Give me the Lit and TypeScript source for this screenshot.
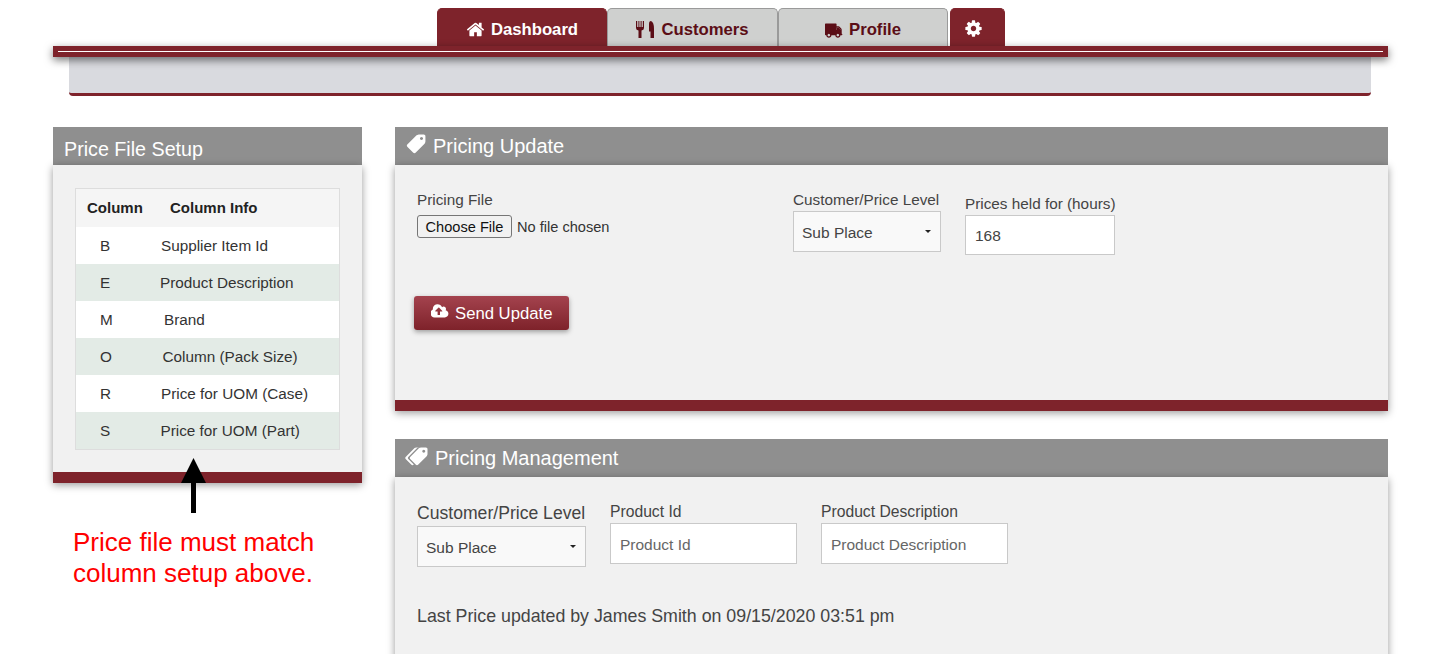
import { LitElement, html, css, svg } from "lit";
import { customElement } from "lit/decorators.js";

const P = {
  home: "M1472 992v480q0 26-19 45t-45 19h-384v-384h-256v384h-384q-26 0-45-19t-19-45v-480q0-1 .5-3t.5-3l575-474 575 474q1 2 1 6zm223-69l-62 74q-8 9-21 11h-3q-13 0-21-7l-692-577-692 577q-12 8-24 7-13-2-21-11l-62-74q-8-10-7-23.500t11-21.500l719-599q32-26 76-26t76 26l244 204v-195q0-14 9-23t23-9h192q14 0 23 9t9 23v408l219 182q10 8 11 21.500t-7 23.500z",
  truck: "M640 1408q0-52-38-90t-90-38-90 38-38 90 38 90 90 38 90-38 38-90zm-384-512h384v-256h-158q-13 0-22 9l-195 195q-9 9-9 22v30zm1280 512q0-52-38-90t-90-38-90 38-38 90 38 90 90 38 90-38 38-90zm256-1088v1024q0 15-4 26.500t-13.500 18.500-16.500 11.500-23.500 6-22.500 2-25.500 0-22.500-.5q0 106-75 181t-181 75-181-75-75-181h-384q0 106-75 181t-181 75-181-75-75-181h-64q-3 0-22.500.5t-25.500 0-22.500-2-23.500-6-16.500-11.500-13.500-18.500-4-26.500q0-26 19-45t45-19v-320q0-8-.5-35t0-38 2.500-34.500 6.500-37 14-30.500 22.500-30l198-198q19-19 50.500-32t58.500-13h160v-192q0-26 19-45t45-19h1024q26 0 45 19t19 45z",
  truckWin: "M256 896h384v-256h-158q-13 0-22 9l-195 195q-9 9-9 22v30z",
  cog: "M1152 896q0-106-75-181t-181-75-181 75-75 181 75 181 181 75 181-75 75-181zm512-109v222q0 12-8 23t-20 13l-185 28q-19 54-39 91 35 50 107 138 10 12 10 25t-9 23q-27 37-99 108t-94 71q-12 0-26-9l-138-108q-44 23-91 38-16 136-29 186-7 28-36 28h-222q-14 0-24.500-8.500t-11.500-21.500l-28-184q-49-16-90-37l-141 107q-10 9-25 9-14 0-25-11-126-114-165-168-7-10-7-23 0-12 8-23 15-21 51-66.500t54-70.500q-27-50-41-99l-183-27q-13-2-21-12.500t-8-23.500v-222q0-12 8-23t19-13l186-28q14-46 39-92-40-57-107-138-10-12-10-24 0-10 9-23 26-36 98.500-107.500t94.500-71.500q13 0 26 10l138 107q44-23 91-38 16-136 29-186 7-28 36-28h222q14 0 24.500 8.500t11.500 21.500l28 184q49 16 90 37l142-107q9-9 24-9 13 0 25 10 129 119 165 170 7 8 7 22 0 12-8 23-15 21-51 66.500t-54 70.500q26 50 41 98l183 28q13 2 21 12.500t8 23.500z",
  tag: "M576 448q0-53-37.500-90.500t-90.500-37.500-90.500 37.500-37.500 90.500 37.500 90.500 90.500 37.500 90.500-37.500 37.500-90.500zm1067 576q0 53-37 90l-491 492q-39 37-91 37-53 0-90-37l-715-716q-38-37-64.500-101t-26.500-117v-416q0-52 38-90t90-38h416q53 0 117 26.500t102 64.500l715 714q37 39 37 91z",
  tags: "M576 448q0-53-37.500-90.500t-90.500-37.500-90.500 37.500-37.500 90.500 37.500 90.500 90.500 37.500 90.500-37.500 37.500-90.500zm1067 576q0 53-37 90l-491 492q-39 37-91 37-53 0-90-37l-715-716q-38-37-64.500-101t-26.500-117v-416q0-52 38-90t90-38h416q53 0 117 26.500t102 64.500l715 714q37 39 37 91zm384 0q0 53-37 90l-491 492q-38 37-90 37-36 0-59-14t-53-45l470-470q37-37 37-90 0-52-37-91l-715-714q-38-38-102-64.500t-117-26.500h224q53 0 117 26.500t102 64.500l715 714q37 39 37 91z",
  cloud: "M1216 864q0-14-9-23l-352-352q-9-9-23-9t-23 9l-351 351q-10 12-10 24 0 14 9 23t23 9h224v352q0 13 9.500 22.500t22.500 9.500h192q13 0 22.500-9.500t9.500-22.500v-352h224q13 0 22.500-9.500t9.500-22.500zm640 288q0 159-112.500 271.500t-271.500 112.500h-1088q-185 0-316.500-131.500t-131.500-316.500q0-130 70-240t188-165q-2-30-2-43 0-212 150-362t362-150q156 0 285.500 87t188.500 231q71-62 166-62 106 0 181 75t75 181q0 76-41 138 130 31 213.500 135.500t83.500 238.500z",
};

const icon = (d: string | string[], w: number, vw: number, flip = false) => html`<svg
  class="ico ${flip ? "flip" : ""}"
  width=${w}
  height=${(w * 1792) / vw}
  viewBox="0 0 ${vw} 1792"
  fill="currentColor"
>${(Array.isArray(d) ? d : [d]).map((p) => svg`<path d=${p}></path>`)}</svg>`;

const ROWS: [string, string, number][] = [
  ["B", "Supplier Item Id", 85],
  ["E", "Product Description", 84],
  ["M", "Brand", 88],
  ["O", "Column (Pack Size)", 86.5],
  ["R", "Price for UOM (Case)", 85],
  ["S", "Price for UOM (Part)", 84.5],
];

@customElement("app-root")
export class AppRoot extends LitElement {
  static styles = css`
    :host {
      display: block;
      height: 100vh;
      overflow: hidden;
      background: #fff;
      padding: 0 52px 0 53px;
      box-sizing: border-box;
      font-family: "Liberation Sans", Arial, sans-serif;
      color: #444;
    }
    .ico { display: block; flex: none; }
    .flip { transform: scaleX(-1); }
    nav {
      display: flex;
      justify-content: center;
      padding: 8px 0 0 1px;
      height: 38px;
      box-sizing: content-box;
    }
    .tab {
      box-sizing: border-box;
      height: 38px;
      width: 170px;
      display: flex;
      align-items: center;
      justify-content: center;
      gap: 6px;
      font-size: 16.7px;
      font-weight: 700;
      color: #5b0d16;
      background: #cfd0cf;
      border: 1px solid #9a9a9a;
      border-bottom: 0;
      border-radius: 5px 5px 0 0;
      padding-top: 4px;
    }
    .tab.mid { width: 171px; gap: 7px; }
    .tab.on { background: #7e232b; border-color: #7e232b; color: #fff; }
    .tab.gear { width: 55px; margin-left: 2px; padding: 2px 8px 0 0; }
    .bar {
      height: 11px;
      background: #7e232b;
      padding: 5px 5px 0;
      box-sizing: border-box;
      box-shadow: 0 3px 9px rgba(0, 0, 0, 0.55);
      position: relative;
      z-index: 1;
    }
    .bar i { display: block; height: 1px; background: #fff; }
    .sub {
      height: 39px;
      box-sizing: border-box;
      margin: 0 17px 0 16px;
      background: #d9dadf;
      border-bottom: 3px solid #7e232b;
      border-radius: 0 0 4px 4px;
    }
    main { display: flex; gap: 33px; margin-top: 31px; align-items: flex-start; }
    .left { width: 309px; flex: none; position: relative; }
    .right { flex: 1; min-width: 0; }
    .head {
      height: 38px;
      background: #8f8f8f;
      color: #fff;
      display: flex;
      align-items: center;
      font-size: 20px;
      padding-left: 10px;
      gap: 6px;
      box-sizing: border-box;
    }
    .left .head { padding: 6px 0 0 11px; font-size: 19.7px; }
    .head .ico { margin-top: -4px; }
    .panel { box-shadow: 0 2px 8px rgba(0, 0, 0, 0.4); background: #f1f1f1; }
    .foot { height: 11px; background: #7e232b; }
    .lbody { padding: 23px 22px 22px; }
    .table { border: 1px solid #ddd; background: #fff; color: #333; font-size: 15.3px; }
    .hrow {
      height: 38px;
      background: #f5f5f5;
      display: flex;
      align-items: center;
      font-weight: 700;
      font-size: 15px;
      color: #222;
      padding: 0 0 2px 11px;
      box-sizing: border-box;
    }
    .hrow span:first-child { width: 83px; }
    .row { height: 37px; display: flex; align-items: center; }
    .row:nth-child(odd) { background: #e3ebe6; }
    .row b { font-weight: 400; width: 0; flex: none; margin-left: 24px; }
    .arrow { position: absolute; left: 128px; top: 331px; display: block; }
    .note { color: #f00; font-size: 26px; line-height: 31px; margin: 44px 0 0 20px; }
    .b1 { height: 235px; padding: 26px 22px 0 22px; box-sizing: border-box; position: relative; }
    .fields { display: flex; align-items: flex-start; }
    .field { display: flex; flex-direction: column; font-size: 15.3px; color: #444; }
    label { display: block; line-height: 17px; margin-bottom: 3px; }
    .wrap { position: relative; display: block; }
    select {
      appearance: none;
      -webkit-appearance: none;
      display: block;
      width: 100%;
      height: 41px;
      box-sizing: border-box;
      border: 1px solid #c9c9c9;
      background: #f9f9f9;
      font: 15.5px "Liberation Sans", Arial, sans-serif;
      color: #444;
      padding: 1px 8px 0;
      border-radius: 0;
      outline: none;
    }
    .caret {
      position: absolute;
      right: 10px;
      top: 19px;
      width: 0;
      height: 0;
      border: 3px solid transparent;
      border-top-color: #222;
      border-bottom: 0;
    }
    input.text {
      display: block;
      box-sizing: border-box;
      height: 41px;
      width: 187px;
      border: 1px solid #c9c9c9;
      background: #fff;
      font: 15.5px "Liberation Sans", Arial, sans-serif;
      color: #444;
      padding: 2px 9px 0;
      border-radius: 0;
      outline: none;
    }
    input.text::placeholder { color: #666; opacity: 1; }
    input[type="file"] {
      font: 14.6px "Liberation Sans", Arial, sans-serif;
      color: #333;
      display: block;
      width: 260px;
      margin-top: 4px;
    }
    input[type="file"]::file-selector-button {
      font: 14.6px "Liberation Sans", Arial, sans-serif;
      color: #111;
      height: 23px;
      width: 95px;
      padding: 0;
      margin-right: 5px;
      background: #f1f1f1;
      border: 1px solid #767676;
      border-radius: 3px;
    }
    .send {
      display: flex;
      align-items: center;
      gap: 6px;
      width: 155px;
      height: 34px;
      box-sizing: border-box;
      margin: 41px 0 0 -3px;
      padding: 0 0 0 17px;
      border: 0;
      border-radius: 3px;
      background: linear-gradient(#a4434e, #7e222a);
      box-shadow: 0 2px 5px rgba(0, 0, 0, 0.35);
      color: #fff;
      font: 16.7px "Liberation Sans", Arial, sans-serif;
    }
    .send .ico { margin-top: -3px; }
    .send span { padding-top: 2px; }
    .gap2 { height: 28px; }
    .b2 { height: 300px; padding: 27px 22px 0; box-sizing: border-box; }
    .b2 .field { font-size: 15.7px; }
    .b2 .field.big { font-size: 17.6px; }
    .b2 label { line-height: 16px; margin-bottom: 3px; }
    .b2 .big label { line-height: 19px; margin-bottom: 3px; }
    .last { font-size: 17.8px; line-height: 20px; margin-top: 39px; color: #444; }
  `;

  render() {
    return html`
      <nav>
        <div class="tab on">${icon(P.home, 19, 1792)}Dashboard</div>
        <div class="tab mid">
          <svg class="ico" width="18" height="17" viewBox="0 0 18 17" fill="currentColor">
            <path d="M0 0H1.200V6H2.400V0H3.400V6H4.600V0H5.600V6H6.800V0H8V7Q8 9 5.500 9.500V17H2.500V9.500Q0 9 0 7Z"></path>
            <path d="M15 0Q18 1 18 8V17H14.500V10.500H13V3Q13 0 15 0Z"></path>
          </svg>
          Customers
        </div>
        <div class="tab">${icon([P.truck, P.truckWin], 18, 1792, true)}Profile</div>
        <div class="tab on gear">${icon(P.cog, 19, 1792)}</div>
      </nav>
      <div class="bar"><i></i></div>
      <div class="sub"></div>
      <main>
        <section class="left">
          <div class="head">Price File Setup</div>
          <div class="panel">
            <div class="lbody">
              <div class="table">
                <div class="hrow"><span>Column</span><span>Column Info</span></div>
                ${ROWS.map(
                  ([c, t, x]) => html`<div class="row">
                    <b>${c}</b><span style="margin-left:${x - 24}px">${t}</span>
                  </div>`
                )}
              </div>
            </div>
            <div class="foot"></div>
          </div>
          <svg class="arrow" width="25" height="56" viewBox="0 0 25 56">
            <path d="M12.500 0L25 25H15V55H10V25H0Z" fill="#000"></path>
          </svg>
          <p class="note">Price file must match<br />column setup above.</p>
        </section>
        <section class="right">
          <div class="head">${icon(P.tag, 22, 1792, true)}Pricing Update</div>
          <div class="panel">
            <div class="b1">
              <div class="fields">
                <div class="field" style="width:376px">
                  <label>Pricing File</label>
                  <input type="file" />
                </div>
                <div class="field" style="width:148px;margin-right:24px">
                  <label>Customer/Price Level</label>
                  <span class="wrap"><select><option>Sub Place</option></select><i class="caret"></i></span>
                </div>
                <div class="field" style="padding-top:4px">
                  <label>Prices held for (hours)</label>
                  <input class="text" style="width:150px;height:40px" value="168" />
                </div>
              </div>
              <button class="send">${icon(P.cloud, 18, 1920)}<span>Send Update</span></button>
            </div>
            <div class="foot"></div>
          </div>
          <div class="gap2"></div>
          <div class="head">${icon(P.tags, 24, 2048, true)}Pricing Management</div>
          <div class="panel">
            <div class="b2">
              <div class="fields">
                <div class="field big" style="width:169px;margin-right:24px">
                  <label>Customer/Price Level</label>
                  <span class="wrap"><select><option>Sub Place</option></select><i class="caret"></i></span>
                </div>
                <div class="field" style="margin-right:24px">
                  <label>Product Id</label>
                  <input class="text" placeholder="Product Id" />
                </div>
                <div class="field">
                  <label>Product Description</label>
                  <input class="text" placeholder="Product Description" />
                </div>
              </div>
              <div class="last">Last Price updated by James Smith on 09/15/2020 03:51 pm</div>
            </div>
          </div>
        </section>
      </main>
    `;
  }
}
